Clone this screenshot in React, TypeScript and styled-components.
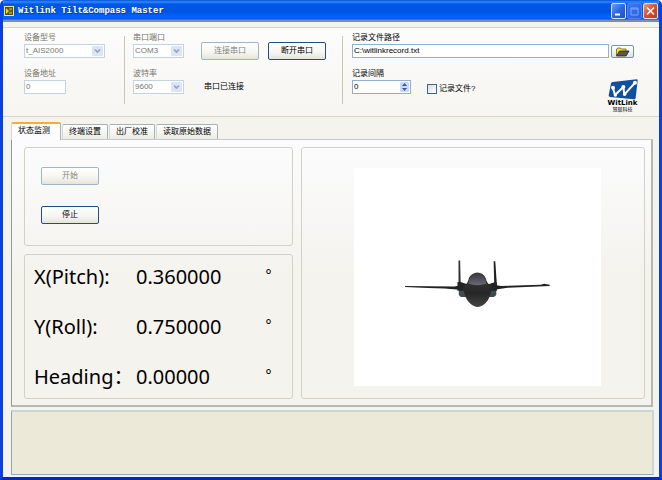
import React, { useState } from "react";
import styled, { createGlobalStyle, css } from "styled-components";

const GlobalStyle = createGlobalStyle`
  *, *::before, *::after { box-sizing: border-box; }
  body { margin: 0; background: #fff; }
  body, button, input, select {
    font-family: "Liberation Sans", "Noto Sans CJK SC", sans-serif;
    font-size: 8px;
    color: #000;
  }
`;

const Window = styled.main`
  display: flex;
  flex-direction: column;
  min-height: 100vh;
  border-radius: 5px 5px 0 0;
  background: #f4f3ee;
  border: solid #0a3fe0;
  border-width: 0 3px 3px;
  border-bottom-color: #0428c8;
  overflow: hidden;
`;

const TitleBar = styled.header`
  display: flex;
  align-items: center;
  gap: 4px;
  height: 22px;
  margin: 0 -3px;
  padding: 0 4px;
  color: #fff;
  background: linear-gradient(#0a50d8 0, #2b8cff 2px, #0058e6 4px, #0054e3 12px, #0066ff 17px, #0058ee 19px, #7a8db0 20px, #7f8ea8 22px);
`;

const Title = styled.h1`
  flex: 1;
  margin: 0;
  font: bold 9px/12px "Liberation Mono", monospace;
  text-shadow: 1px 1px 0 #0a3ba0;
`;

const Caption = styled.button<{ $kind: "min" | "max" | "close" }>`
  display: flex;
  width: 15px;
  height: 16px;
  padding: 0;
  margin-left: -3px;
  border: 1px solid ${(p) => (p.$kind === "max" ? "#4d80ee" : "#d5e0fa")};
  border-radius: 2px;
  background: ${(p) =>
    p.$kind === "close"
      ? "linear-gradient(135deg, #f09a80, #e0502c 45%, #c23a14)"
      : p.$kind === "min"
        ? "linear-gradient(135deg, #6f9cf7, #2e66e4 50%, #1c50d0)"
        : "linear-gradient(135deg, #3c78f0, #2460e4)"};
  svg { width: 100%; height: 100%; }
`;

const Settings = styled.section`
  display: flex;
  margin-top: 5px;
  height: 90px;
  padding: 4px 20px 4px 21px;
  border: solid #d8d7c8;
  border-width: 1px 0;
  background: linear-gradient(#fcfcfb, #f6f5f1);
`;

const Column = styled.div<{ $grow?: boolean }>`
  display: flex;
  flex-direction: column;
  gap: 10px;
  min-width: 0;
  ${(p) => p.$grow && css`flex: 1;`}
`;

const Divider = styled.hr<{ $left: number; $right: number }>`
  align-self: flex-start;
  width: 2px;
  height: 68px;
  margin: 4px ${(p) => p.$right}px 0 ${(p) => p.$left}px;
  border: solid #c8c7b5;
  border-width: 0 1px 0 0;
`;

const Field = styled.div<{ $muted?: boolean }>`
  display: flex;
  flex-direction: column;
  color: ${(p) => (p.$muted ? "#77776f" : "#000")};
`;

const Label = styled.label`
  line-height: 12px;
`;

const Line = styled.div<{ $gap?: number; $inset?: number }>`
  display: flex;
  align-items: flex-end;
  gap: ${(p) => p.$gap ?? 2}px;
  padding-right: ${(p) => p.$inset ?? 0}px;
`;

const Box = styled.div<{ $width?: number; $muted?: boolean }>`
  display: flex;
  align-items: center;
  height: 14px;
  ${(p) => (p.$width ? css`width: ${p.$width}px;` : css`flex: 1;`)}
  padding-right: 1px;
  border: 1px solid ${(p) => (p.$muted ? "#c3d3e2" : "#8fb0ce")};
  background: #fff;
  position: relative;
  select, input {
    flex: 1;
    min-width: 0;
    width: 100%;
    height: 12px;
    padding: 0 1px;
    border: 0;
    outline: 0;
    appearance: none;
    background: transparent;
    line-height: 12px;
    opacity: 1;
    color: ${(p) => (p.$muted ? "#77776f" : "#000")};
  }
`;

const Drop = styled.svg`
  position: absolute;
  right: 1px;
  top: 1px;
  width: 11px;
  height: 10px;
  pointer-events: none;
`;

const Spinner = styled.div`
  display: flex;
  flex-direction: column;
  width: 9px;
  height: 10px;
  border-radius: 1px;
  background: #c8d8fb;
`;

const Step = styled.button`
  display: flex;
  flex: 1;
  min-height: 0;
  padding: 0;
  border: 0;
  background: none;
  svg { width: 9px; height: 5px; }
`;

const PushButton = styled.button<{ $strong?: boolean }>`
  width: 58px;
  height: 18px;
  padding: 0;
  border: 1px solid ${(p) => (p.$strong ? "#1d4f83" : "#9fb6c9")};
  border-radius: 2px;
  background: linear-gradient(#fff, #f5f5f0 60%, #e5e3da);
  color: ${(p) => (p.$strong ? "#000" : "#85857d")};
  line-height: 16px;
`;

const Connection = styled.div`
  display: grid;
  grid-template-columns: 58px 58px;
  column-gap: 9px;
  row-gap: 21px;
  align-content: start;
  margin-left: 17px;
  padding-top: 10px;
`;

const Status = styled.output`
  padding-left: 3px;
  line-height: 12px;
`;

const BrowseButton = styled.button`
  display: flex;
  align-items: center;
  justify-content: center;
  width: 23px;
  height: 13px;
  padding: 0;
  border: 1px solid #6f93b4;
  border-radius: 2px;
  background: linear-gradient(#fff, #e2e2dc);
  svg { width: 15px; height: 10px; }
`;

const Check = styled.label`
  display: flex;
  align-items: center;
  gap: 2px;
  height: 10px;
  line-height: 12px;
  input {
    appearance: none;
    width: 10px;
    height: 10px;
    margin: 0;
    border: 1px solid #35688f;
    background: linear-gradient(135deg, #dddcd4, #fff);
  }
  input:checked { background: #21a121; }
`;

const LogoBlock = styled.figure`
  display: flex;
  flex-direction: column;
  align-items: center;
  align-self: flex-end;
  width: 33px;
  margin: 0;
  svg { width: 30px; height: 21px; }
`;

const LogoName = styled.strong`
  font: bold 7px/7px "DejaVu Sans", sans-serif;
`;

const LogoSub = styled.span`
  font-size: 5px;
  line-height: 5px;
`;

const IntervalRow = styled.div`
  display: flex;
  justify-content: space-between;
  height: 44px;
`;

const Tabs = styled.nav`
  display: flex;
  align-items: flex-end;
  gap: 1px;
  height: 17px;
  margin: 5px 8px 0;
`;

const Tab = styled.button<{ $active: boolean }>`
  height: 15px;
  padding: 0 6px;
  border: 1px solid #a5b2b4;
  border-left-color: #d5d9d5;
  border-bottom: 0;
  border-radius: 2px 2px 0 0;
  background: linear-gradient(#fff, #ecebe5);
  line-height: 12px;
  ${(p) =>
    p.$active &&
    css`
      height: 18px;
      margin-bottom: -1px;
      padding: 0 10px 2px 6px;
      border-top: 2px solid #f5ad38;
      background: #fcfcfe;
      z-index: 1;
    `}
`;

const TabPanel = styled.section`
  display: grid;
  grid-template-columns: 269fr 345fr;
  column-gap: 8px;
  flex: 1;
  margin: 0 6px 0 8px;
  padding: 7px 6px 6px 12px;
  border: solid #919b9c;
  border-width: 1px 2px 2px 1px;
  border-top-color: #c5cccb;
  border-right-color: #b3b8b0;
  border-bottom-color: #b3b8b0;
  background: linear-gradient(#fcfcfe, #f4f3ee 50%);
`;

const Stack = styled.div`
  display: flex;
  flex-direction: column;
  gap: 8px;
`;

const Group = styled.div`
  border: 1px solid #d3d2c2;
  border-radius: 3px;
`;

const Actions = styled(Group)`
  display: flex;
  flex-direction: column;
  gap: 21px;
  height: 99px;
  padding: 19px 16px;
`;

const Readings = styled(Group)`
  display: grid;
  grid-template-columns: 102px 1fr 26px;
  grid-auto-rows: 30px;
  row-gap: 20px;
  align-content: center;
  flex: 1;
  padding: 0 0 0 9px;
  font-family: "Noto Sans", "Noto Sans CJK SC", sans-serif;
  font-size: 20px;
  line-height: 30px;
`;

const ReadingLabel = styled.span`
  white-space: nowrap;
`;

const Unit = styled.span`
  font-size: 14px;
  line-height: 26px;
`;

const Viewer = styled(Group)`
  display: flex;
  align-items: center;
  justify-content: center;
  padding: 8px 0 0 9px;
`;

const Scene = styled.div`
  width: 74%;
  background: #fff;
  svg { display: block; width: 100%; }
`;

const Log = styled.output`
  height: 65px;
  margin: 3px 5px 2px 8px;
  border: 1px solid #8fa9b8;
  border-top: 2px solid #c9d6da;
  border-right: 2px solid #c9d6da;
  background: #ece9d8;
`;

function Arrow() {
  return (
    <Drop viewBox="0 0 11 10">
      <rect width="11" height="10" rx="1" fill="#dce5f8" />
      <path d="M3 3.5 L5.5 6 L8 3.5" fill="none" stroke="#94a3bd" strokeWidth="1.7" />
    </Drop>
  );
}

function Choice({ id, label, value, width }: { id: string; label: string; value: string; width: number }) {
  return (
    <Field $muted>
      <Label htmlFor={id}>{label}</Label>
      <Box $width={width} $muted>
        <select id={id} disabled defaultValue={value}>
          <option>{value}</option>
        </select>
        <Arrow />
      </Box>
    </Field>
  );
}

function AppIcon() {
  return (
    <svg width="10" height="10" viewBox="0 0 10 10" aria-hidden="true">
      <rect width="10" height="10" fill="#ffe36a" />
      <rect x="1" y="1" width="8" height="8" fill="#3b5a36" />
      <path d="M2 2 L5 5 L2 8Z" fill="#ffd900" />
      <path d="M5 3h3M5 7h3" stroke="#e7d04a" />
      <path d="M5 5h3" stroke="#e04020" />
    </svg>
  );
}

function Logo() {
  return (
    <LogoBlock>
      <svg viewBox="0 0 90 63" aria-hidden="true">
        <path d="M9 13 Q10 10 14 9 L86 1 Q89 1 89 5 L83 57 Q82 61 78 61 L6 54 Q1 53 2 49Z" fill="#124f9d" />
        <path d="M15 27 L21 48 L46 24 L49 47 L82 10" fill="none" stroke="#fff" strokeWidth="6" strokeLinejoin="round" />
        <g fill="#fff">
          <circle cx="15" cy="26" r="6" />
          <circle cx="22" cy="48" r="5" />
          <circle cx="46" cy="24" r="6" />
          <circle cx="50" cy="46" r="5" />
          <circle cx="81" cy="11" r="6" />
        </g>
      </svg>
      <LogoName>WitLink</LogoName>
      <LogoSub>慧联科技</LogoSub>
    </LogoBlock>
  );
}

function Aircraft() {
  return (
    <svg viewBox="-123 -246 744 657" role="img" aria-label="Aircraft attitude">
      <defs>
        <linearGradient id="nose" x1="0" y1="0" x2="0" y2="1">
          <stop offset="0" stopColor="#3c3c3c" />
          <stop offset="0.6" stopColor="#262626" />
          <stop offset="1" stopColor="#454545" />
        </linearGradient>
        <linearGradient id="canopy" x1="0" y1="0" x2="0" y2="1">
          <stop offset="0" stopColor="#3a3a40" />
          <stop offset="1" stopColor="#6a6976" />
        </linearGradient>
      </defs>
      <path d="M31 110 L180 111 L205 106 L205 122 L150 117 L100 116 L31 113Z" fill="#222" />
      <path d="M467 106 L450 103 L440 106 L320 110 L295 105 L295 122 L340 115 L467 110Z" fill="#222" />
      <path d="M192 33 L197 33 L199 112 L192 112Z" fill="#333" />
      <path d="M298 35 L303 35 L308 110 L300 112Z" fill="#222" />
      <path d="M193 122 H225 V143 H199 L193 137Z" fill="#3c4e4c" />
      <path d="M306 122 H274 V143 H299 L306 137Z" fill="#3c4e4c" />
      <path d="M189 98 L199 98 L216 104 L285 104 L298 99 L308 99 L308 124 L189 124Z" fill="#242424" />
      <path d="M206 112 Q220 104 224 84 Q232 70 249 69 Q267 70 274 86 Q278 104 292 112 Q290 145 274 161 Q264 172 251 173 Q236 172 225 160 Q209 145 206 112Z" fill="url(#nose)" />
      <path d="M222 103 Q225 79 240 74 Q249 70 260 76 Q273 82 276 103 Q249 112 222 103Z" fill="url(#canopy)" />
    </svg>
  );
}

const tabNames = ["状态监测", "终端设置", "出厂校准", "读取原始数据"];

const readings = [
  { label: "X(Pitch):", value: "0.360000" },
  { label: "Y(Roll):", value: "0.750000" },
  { label: "Heading：", value: "0.00000" },
];

export default function App() {
  const [tab, setTab] = useState(0);
  const [interval, setRecordInterval] = useState(0);

  return (
    <>
      <GlobalStyle />
      <Window>
        <TitleBar>
          <AppIcon />
          <Title>Witlink Tilt&amp;Compass Master</Title>
          <Caption $kind="min" aria-label="Minimize">
            <svg viewBox="0 0 13 14"><path d="M3 10.5h5" stroke="#fff" strokeWidth="2" /></svg>
          </Caption>
          <Caption $kind="max" aria-label="Maximize" disabled>
            <svg viewBox="0 0 13 14"><path d="M3 4h7v7h-7z M3 5h7" fill="none" stroke="#7ea4f5" /></svg>
          </Caption>
          <Caption $kind="close" aria-label="Close">
            <svg viewBox="0 0 13 14"><path d="M3 3.5 L10 10.5 M10 3.5 L3 10.5" stroke="#fff" strokeWidth="1.6" /></svg>
          </Caption>
        </TitleBar>

        <Settings>
          <Column>
            <Choice id="model" label="设备型号" value="t_AIS2000" width={81} />
            <Field $muted>
              <Label htmlFor="address">设备地址</Label>
              <Box $width={42} $muted>
                <input id="address" defaultValue="0" disabled />
              </Box>
            </Field>
          </Column>
          <Divider $left={18} $right={8} />
          <Column>
            <Choice id="port" label="串口端口" value="COM3" width={51} />
            <Choice id="baud" label="波特率" value="9600" width={51} />
          </Column>
          <Connection>
            <PushButton disabled>连接串口</PushButton>
            <PushButton $strong>断开串口</PushButton>
            <Status>串口已连接</Status>
          </Connection>
          <Divider $left={15} $right={9} />
          <Column $grow>
            <Field>
              <Label htmlFor="path">记录文件路径</Label>
              <Line $inset={5}>
                <Box>
                  <input id="path" defaultValue="C:\witlinkrecord.txt" />
                </Box>
                <BrowseButton aria-label="Browse">
                  <svg viewBox="0 0 15 10">
                    <path d="M1.5 8.5 V2 L3 1 H5.5 L6.5 2 H11 V4" fill="#f2e51e" stroke="#6b6510" strokeWidth="0.8" />
                    <path d="M1.5 9 L4.5 4 H14 L11 9Z" fill="#5b5a3a" stroke="#222" strokeWidth="0.8" />
                  </svg>
                </BrowseButton>
              </Line>
            </Field>
            <IntervalRow>
              <Field>
                <Label htmlFor="interval">记录间隔</Label>
                <Line $gap={16}>
                  <Box $width={59}>
                    <input id="interval" value={interval} onChange={(e) => setRecordInterval(Number(e.target.value) || 0)} />
                    <Spinner>
                      <Step aria-label="Increase" onClick={() => setRecordInterval(interval + 1)}>
                        <svg viewBox="0 0 9 5"><path d="M2 4 L4.5 1 L7 4Z" fill="#3f5b8c" /></svg>
                      </Step>
                      <Step aria-label="Decrease" onClick={() => setRecordInterval(Math.max(0, interval - 1))}>
                        <svg viewBox="0 0 9 5"><path d="M2 1 L4.5 4 L7 1Z" fill="#3f5b8c" /></svg>
                      </Step>
                    </Spinner>
                  </Box>
                  <Check>
                    <input type="checkbox" />
                    记录文件?
                  </Check>
                </Line>
              </Field>
              <Logo />
            </IntervalRow>
          </Column>
        </Settings>

        <Tabs>
          {tabNames.map((name, i) => (
            <Tab key={name} $active={tab === i} onClick={() => setTab(i)}>
              {name}
            </Tab>
          ))}
        </Tabs>

        <TabPanel>
          <Stack>
            <Actions>
              <PushButton disabled>开始</PushButton>
              <PushButton $strong>停止</PushButton>
            </Actions>
            <Readings>
              {readings.map((r) => (
                <React.Fragment key={r.label}>
                  <ReadingLabel>{r.label}</ReadingLabel>
                  <span>{r.value}</span>
                  <Unit>°</Unit>
                </React.Fragment>
              ))}
            </Readings>
          </Stack>
          <Viewer>
            <Scene>
              <Aircraft />
            </Scene>
          </Viewer>
        </TabPanel>

        <Log aria-label="Log" />
      </Window>
    </>
  );
}
